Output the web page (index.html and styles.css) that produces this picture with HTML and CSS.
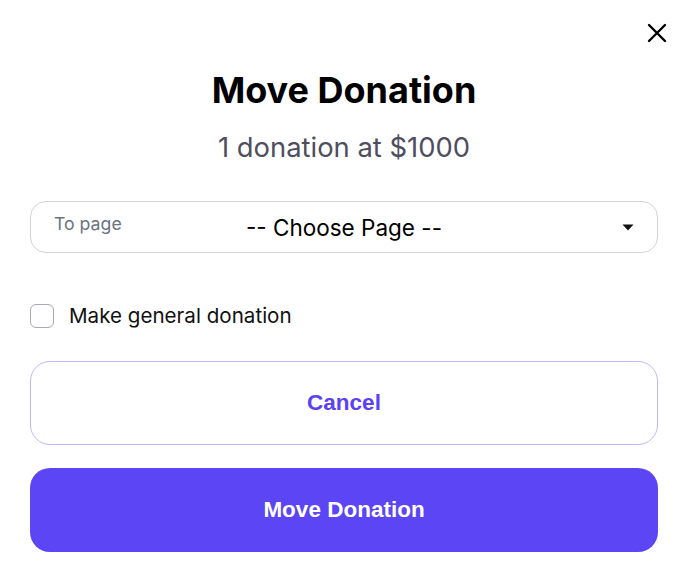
FILE: index.html
```html
<!DOCTYPE html>
<html>
<head>
<meta charset="utf-8">
<link rel="stylesheet" href="styles.css">
</head>
<body>
<div class="modal">
  <button class="close" aria-label="Close">
    <svg width="20" height="20" viewBox="0 0 20 20"><path d="M2 2 L18 18 M18 2 L2 18" stroke="#000" stroke-width="2.4" stroke-linecap="round"/></svg>
  </button>
  <h1 class="title">Move Donation</h1>
  <p class="subtitle">1 donation at $1000</p>
  <div class="select">
    <span class="select-label">To page</span>
    <span class="select-value">-- Choose Page --</span>
    <svg class="caret" width="12" height="7" viewBox="0 0 12 7"><path d="M0.5 0.5 L11.5 0.5 L6 6.5 Z" fill="#111"/></svg>
  </div>
  <label class="check">
    <span class="box"></span>
    <span class="check-text">Make general donation</span>
  </label>
  <button class="btn btn-outline">Cancel</button>
  <button class="btn btn-primary">Move Donation</button>
</div>
</body>
</html>
```
FILE: styles.css
```css
* { box-sizing: border-box; }
html, body { margin: 0; padding: 0; background: #fff; }
body { font-family: Inter, "Noto Sans", sans-serif; width: 698px; height: 578px; overflow: hidden; }
.modal { position: relative; display: flex; flex-direction: column; padding: 68px 40px 0 30px; }
.close { position: absolute; top: 23px; left: 647px; width: 20px; height: 20px; padding: 0; border: 0; background: none; }
.close svg { display: block; }
.title { margin: 0; text-align: center; font-size: 36px; line-height: 44px; font-weight: 700; color: #000; }
.subtitle { margin: 18px 0 0; text-align: center; font-size: 27.4px; line-height: 34px; font-weight: 400; color: #4f4d60; }
.select { position: relative; margin-top: 37px; height: 52px; border: 1px solid #d3d3d8; border-radius: 16px; display: flex; align-items: center; justify-content: center; }
.select-label { position: absolute; left: 23px; top: 11px; font-size: 17.7px; line-height: 22px; color: #6b7280; }
.select-value { font-size: 22.5px; line-height: 28px; color: #000; margin-top: 2px; }
.caret { position: absolute; right: 23px; top: 22px; }
.check { display: flex; align-items: center; gap: 15px; margin-top: 51px; height: 24px; }
.box { width: 24px; height: 24px; border: 1.5px solid #a9a9b0; border-radius: 6px; }
.check-text { font-size: 20.6px; line-height: 24px; color: #111; }
.btn { width: 100%; height: 84px; border-radius: 20px; font-family: "Liberation Sans", Arial, sans-serif; font-weight: 700; font-size: 22.5px; cursor: pointer; }
.btn-outline { margin-top: 33px; background: #fff; border: 1px solid #c2b8fb; color: #5b42f3; }
.btn-primary { margin-top: 23px; background: #5b45f5; border: 0; color: #fff; }
```
